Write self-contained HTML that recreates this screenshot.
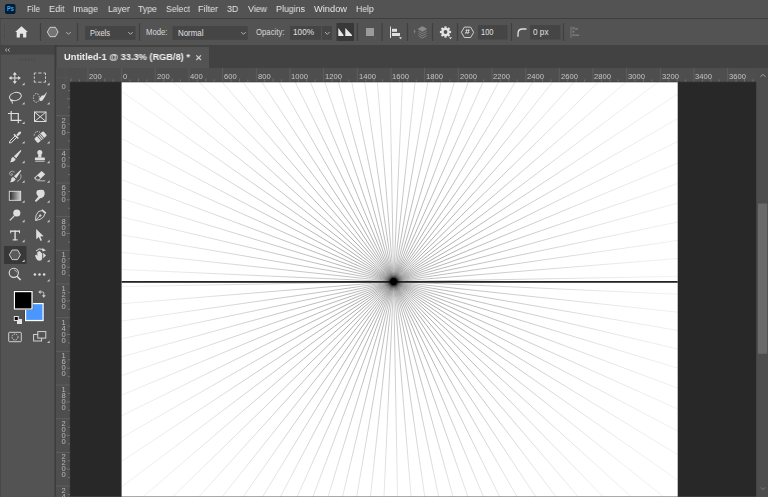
<!DOCTYPE html>
<html lang="en"><head><meta charset="utf-8"><title>Untitled-1 @ 33.3% (RGB/8)</title>
<style>
html,body{margin:0;padding:0;background:#535353;}
body{width:768px;height:497px;overflow:hidden;position:relative;font-family:"Liberation Sans",sans-serif;}
svg.bg{position:absolute;left:0;top:0;width:768px;height:497px;display:block;}
.t{position:absolute;white-space:nowrap;line-height:1.15;transform-origin:0 50%;display:block;}
.r{line-height:1;}
.v{width:5px;text-align:center;}
.g{will-change:transform;}
</style></head>
<body>
<svg class="bg" width="768" height="497" viewBox="0 0 768 497">
<rect x="0" y="0" width="768" height="497" fill="#535353" />
<rect x="0" y="19" width="1" height="26" fill="#494949" />
<rect x="0" y="18" width="768" height="1" fill="#3f3f3f" />
<rect x="0" y="45" width="768" height="23" fill="#424242" />
<rect x="0" y="45" width="55" height="10" fill="#454545" />
<rect x="0" y="54.5" width="55" height="443" fill="#535353" />
<rect x="0" y="54.5" width="1" height="443" fill="#484848" />
<rect x="54.5" y="45" width="2" height="452" fill="#3c3c3c" />
<rect x="56.5" y="47" width="152.5" height="21" fill="#535353" />
<rect x="56" y="68" width="712" height="14" fill="#4e4e4e" />
<rect x="56" y="82" width="14" height="415" fill="#4e4e4e" />
<rect x="70" y="82" width="686.5" height="415" fill="#282828" />
<rect x="756.5" y="68" width="11.5" height="429" fill="#4d4d4d" />
<rect x="758" y="203.5" width="9.2" height="150.2" fill="#6a6a6a" rx="0.8"/>
<rect x="121.6" y="82" width="556.1" height="415" fill="#ffffff" />
<defs><clipPath id="doc"><rect x="121.6" y="82" width="556.1" height="415"/></clipPath><radialGradient id="rg" gradientUnits="userSpaceOnUse" cx="393.6" cy="281.6" r="340"><stop offset="0.0000" stop-color="#000" stop-opacity="0.2"/><stop offset="0.0147" stop-color="#000" stop-opacity="0.22"/><stop offset="0.0265" stop-color="#000" stop-opacity="0.3"/><stop offset="0.0412" stop-color="#000" stop-opacity="0.33"/><stop offset="0.0529" stop-color="#000" stop-opacity="0.31"/><stop offset="0.0824" stop-color="#000" stop-opacity="0.3"/><stop offset="0.1324" stop-color="#000" stop-opacity="0.33"/><stop offset="0.2941" stop-color="#000" stop-opacity="0.28"/><stop offset="0.4706" stop-color="#000" stop-opacity="0.2"/><stop offset="0.6471" stop-color="#000" stop-opacity="0.12"/><stop offset="0.8235" stop-color="#000" stop-opacity="0.075"/><stop offset="1.0000" stop-color="#000" stop-opacity="0.055"/></radialGradient><radialGradient id="halo" gradientUnits="userSpaceOnUse" cx="393.6" cy="281.6" r="10"><stop offset="0" stop-color="#000" stop-opacity="1"/><stop offset="0.31" stop-color="#000" stop-opacity="1"/><stop offset="0.46" stop-color="#000" stop-opacity="0.45"/><stop offset="0.7" stop-color="#000" stop-opacity="0.15"/><stop offset="1" stop-color="#000" stop-opacity="0"/></radialGradient></defs>
<g clip-path="url(#doc)"><g stroke="url(#rg)" stroke-width="1" fill="none"><path d="M393.60 281.60L412.29 -137.98" stroke-opacity="0.69"/><path d="M393.60 281.60L438.60 -135.98" stroke-opacity="0.75"/><path d="M393.60 281.60L464.73 -132.33" stroke-opacity="0.80"/><path d="M393.60 281.60L490.58 -127.05" stroke-opacity="0.84"/><path d="M393.60 281.60L516.05 -120.16" stroke-opacity="0.87"/><path d="M393.60 281.60L541.03 -111.67" stroke-opacity="0.90"/><path d="M393.60 281.60L565.43 -101.64" stroke-opacity="0.93"/><path d="M393.60 281.60L589.16 -90.09" stroke-opacity="0.95"/><path d="M393.60 281.60L612.11 -77.08" stroke-opacity="0.97"/><path d="M393.60 281.60L634.20 -62.65" stroke-opacity="0.98"/><path d="M393.60 281.60L655.34 -46.87" stroke-opacity="0.99"/><path d="M393.60 281.60L675.45 -29.78" stroke-opacity="1.00"/><path d="M393.60 281.60L694.45 -11.47" stroke-opacity="1.00"/><path d="M393.60 281.60L712.26 8.00" stroke-opacity="1.00"/><path d="M393.60 281.60L728.81 28.55" stroke-opacity="0.99"/><path d="M393.60 281.60L744.03 50.09" stroke-opacity="0.98"/><path d="M393.60 281.60L757.88 72.55" stroke-opacity="0.96"/><path d="M393.60 281.60L770.29 95.84" stroke-opacity="0.94"/><path d="M393.60 281.60L781.21 119.86" stroke-opacity="0.92"/><path d="M393.60 281.60L790.60 144.51" stroke-opacity="0.89"/><path d="M393.60 281.60L798.42 169.71" stroke-opacity="0.86"/><path d="M393.60 281.60L804.65 195.35" stroke-opacity="0.82"/><path d="M393.60 281.60L809.25 221.33" stroke-opacity="0.78"/><path d="M393.60 281.60L812.22 247.55" stroke-opacity="0.73"/><path d="M393.60 281.60L813.53 273.90" stroke-opacity="0.66"/><path d="M393.60 281.60L813.18 300.29" stroke-opacity="0.69"/><path d="M393.60 281.60L811.18 326.60" stroke-opacity="0.75"/><path d="M393.60 281.60L807.53 352.73" stroke-opacity="0.80"/><path d="M393.60 281.60L802.25 378.58" stroke-opacity="0.84"/><path d="M393.60 281.60L795.36 404.05" stroke-opacity="0.87"/><path d="M393.60 281.60L786.87 429.03" stroke-opacity="0.90"/><path d="M393.60 281.60L776.84 453.43" stroke-opacity="0.93"/><path d="M393.60 281.60L765.29 477.16" stroke-opacity="0.95"/><path d="M393.60 281.60L752.28 500.11" stroke-opacity="0.97"/><path d="M393.60 281.60L737.85 522.20" stroke-opacity="0.98"/><path d="M393.60 281.60L722.07 543.34" stroke-opacity="0.99"/><path d="M393.60 281.60L704.98 563.45" stroke-opacity="1.00"/><path d="M393.60 281.60L686.67 582.45" stroke-opacity="1.00"/><path d="M393.60 281.60L667.20 600.26" stroke-opacity="1.00"/><path d="M393.60 281.60L646.65 616.81" stroke-opacity="0.99"/><path d="M393.60 281.60L625.11 632.03" stroke-opacity="0.98"/><path d="M393.60 281.60L602.65 645.88" stroke-opacity="0.96"/><path d="M393.60 281.60L579.36 658.29" stroke-opacity="0.94"/><path d="M393.60 281.60L555.34 669.21" stroke-opacity="0.92"/><path d="M393.60 281.60L530.69 678.60" stroke-opacity="0.89"/><path d="M393.60 281.60L505.49 686.42" stroke-opacity="0.86"/><path d="M393.60 281.60L479.85 692.65" stroke-opacity="0.82"/><path d="M393.60 281.60L453.87 697.25" stroke-opacity="0.78"/><path d="M393.60 281.60L427.65 700.22" stroke-opacity="0.73"/><path d="M393.60 281.60L401.30 701.53" stroke-opacity="0.66"/><path d="M393.60 281.60L374.91 701.18" stroke-opacity="0.69"/><path d="M393.60 281.60L348.60 699.18" stroke-opacity="0.75"/><path d="M393.60 281.60L322.47 695.53" stroke-opacity="0.80"/><path d="M393.60 281.60L296.62 690.25" stroke-opacity="0.84"/><path d="M393.60 281.60L271.15 683.36" stroke-opacity="0.87"/><path d="M393.60 281.60L246.17 674.87" stroke-opacity="0.90"/><path d="M393.60 281.60L221.77 664.84" stroke-opacity="0.93"/><path d="M393.60 281.60L198.04 653.29" stroke-opacity="0.95"/><path d="M393.60 281.60L175.09 640.28" stroke-opacity="0.97"/><path d="M393.60 281.60L153.00 625.85" stroke-opacity="0.98"/><path d="M393.60 281.60L131.86 610.07" stroke-opacity="0.99"/><path d="M393.60 281.60L111.75 592.98" stroke-opacity="1.00"/><path d="M393.60 281.60L92.75 574.67" stroke-opacity="1.00"/><path d="M393.60 281.60L74.94 555.20" stroke-opacity="1.00"/><path d="M393.60 281.60L58.39 534.65" stroke-opacity="0.99"/><path d="M393.60 281.60L43.17 513.11" stroke-opacity="0.98"/><path d="M393.60 281.60L29.32 490.65" stroke-opacity="0.96"/><path d="M393.60 281.60L16.91 467.36" stroke-opacity="0.94"/><path d="M393.60 281.60L5.99 443.34" stroke-opacity="0.92"/><path d="M393.60 281.60L-3.40 418.69" stroke-opacity="0.89"/><path d="M393.60 281.60L-11.22 393.49" stroke-opacity="0.86"/><path d="M393.60 281.60L-17.45 367.85" stroke-opacity="0.82"/><path d="M393.60 281.60L-22.05 341.87" stroke-opacity="0.78"/><path d="M393.60 281.60L-25.02 315.65" stroke-opacity="0.73"/><path d="M393.60 281.60L-26.33 289.30" stroke-opacity="0.66"/><path d="M393.60 281.60L-25.98 262.91" stroke-opacity="0.69"/><path d="M393.60 281.60L-23.98 236.60" stroke-opacity="0.75"/><path d="M393.60 281.60L-20.33 210.47" stroke-opacity="0.80"/><path d="M393.60 281.60L-15.05 184.62" stroke-opacity="0.84"/><path d="M393.60 281.60L-8.16 159.15" stroke-opacity="0.87"/><path d="M393.60 281.60L0.33 134.17" stroke-opacity="0.90"/><path d="M393.60 281.60L10.36 109.77" stroke-opacity="0.93"/><path d="M393.60 281.60L21.91 86.04" stroke-opacity="0.95"/><path d="M393.60 281.60L34.92 63.09" stroke-opacity="0.97"/><path d="M393.60 281.60L49.35 41.00" stroke-opacity="0.98"/><path d="M393.60 281.60L65.13 19.86" stroke-opacity="0.99"/><path d="M393.60 281.60L82.22 -0.25" stroke-opacity="1.00"/><path d="M393.60 281.60L100.53 -19.25" stroke-opacity="1.00"/><path d="M393.60 281.60L120.00 -37.06" stroke-opacity="1.00"/><path d="M393.60 281.60L140.55 -53.61" stroke-opacity="0.99"/><path d="M393.60 281.60L162.09 -68.83" stroke-opacity="0.98"/><path d="M393.60 281.60L184.55 -82.68" stroke-opacity="0.96"/><path d="M393.60 281.60L207.84 -95.09" stroke-opacity="0.94"/><path d="M393.60 281.60L231.86 -106.01" stroke-opacity="0.92"/><path d="M393.60 281.60L256.51 -115.40" stroke-opacity="0.89"/><path d="M393.60 281.60L281.71 -123.22" stroke-opacity="0.86"/><path d="M393.60 281.60L307.35 -129.45" stroke-opacity="0.82"/><path d="M393.60 281.60L333.33 -134.05" stroke-opacity="0.78"/><path d="M393.60 281.60L359.55 -137.02" stroke-opacity="0.73"/><path d="M393.60 281.60L385.90 -138.33" stroke-opacity="0.66"/></g><rect x="121" y="281.05" width="557" height="1.7" fill="#1a1a1a"/><circle cx="393.6" cy="281.6" r="10" fill="url(#halo)"/></g>
<rect x="87.43" y="68" width="1" height="14" fill="#5e5e5e" />
<rect x="121.10" y="68" width="1" height="14" fill="#5e5e5e" />
<rect x="154.77" y="68" width="1" height="14" fill="#5e5e5e" />
<rect x="188.44" y="68" width="1" height="14" fill="#5e5e5e" />
<rect x="222.11" y="68" width="1" height="14" fill="#5e5e5e" />
<rect x="255.78" y="68" width="1" height="14" fill="#5e5e5e" />
<rect x="289.45" y="68" width="1" height="14" fill="#5e5e5e" />
<rect x="323.12" y="68" width="1" height="14" fill="#5e5e5e" />
<rect x="356.79" y="68" width="1" height="14" fill="#5e5e5e" />
<rect x="390.46" y="68" width="1" height="14" fill="#5e5e5e" />
<rect x="424.13" y="68" width="1" height="14" fill="#5e5e5e" />
<rect x="457.80" y="68" width="1" height="14" fill="#5e5e5e" />
<rect x="491.47" y="68" width="1" height="14" fill="#5e5e5e" />
<rect x="525.14" y="68" width="1" height="14" fill="#5e5e5e" />
<rect x="558.81" y="68" width="1" height="14" fill="#5e5e5e" />
<rect x="592.48" y="68" width="1" height="14" fill="#5e5e5e" />
<rect x="626.15" y="68" width="1" height="14" fill="#5e5e5e" />
<rect x="659.82" y="68" width="1" height="14" fill="#5e5e5e" />
<rect x="693.49" y="68" width="1" height="14" fill="#5e5e5e" />
<rect x="727.16" y="68" width="1" height="14" fill="#5e5e5e" />
<rect x="70.59" y="78.5" width="1" height="3.5" fill="#6e6e6e" />
<rect x="79.01" y="79.5" width="1" height="2.5" fill="#6e6e6e" />
<rect x="95.85" y="79.5" width="1" height="2.5" fill="#6e6e6e" />
<rect x="104.26" y="78.5" width="1" height="3.5" fill="#6e6e6e" />
<rect x="112.68" y="79.5" width="1" height="2.5" fill="#6e6e6e" />
<rect x="129.52" y="79.5" width="1" height="2.5" fill="#6e6e6e" />
<rect x="137.94" y="78.5" width="1" height="3.5" fill="#6e6e6e" />
<rect x="146.35" y="79.5" width="1" height="2.5" fill="#6e6e6e" />
<rect x="163.19" y="79.5" width="1" height="2.5" fill="#6e6e6e" />
<rect x="171.60" y="78.5" width="1" height="3.5" fill="#6e6e6e" />
<rect x="180.02" y="79.5" width="1" height="2.5" fill="#6e6e6e" />
<rect x="196.86" y="79.5" width="1" height="2.5" fill="#6e6e6e" />
<rect x="205.28" y="78.5" width="1" height="3.5" fill="#6e6e6e" />
<rect x="213.69" y="79.5" width="1" height="2.5" fill="#6e6e6e" />
<rect x="230.53" y="79.5" width="1" height="2.5" fill="#6e6e6e" />
<rect x="238.94" y="78.5" width="1" height="3.5" fill="#6e6e6e" />
<rect x="247.36" y="79.5" width="1" height="2.5" fill="#6e6e6e" />
<rect x="264.20" y="79.5" width="1" height="2.5" fill="#6e6e6e" />
<rect x="272.62" y="78.5" width="1" height="3.5" fill="#6e6e6e" />
<rect x="281.03" y="79.5" width="1" height="2.5" fill="#6e6e6e" />
<rect x="297.87" y="79.5" width="1" height="2.5" fill="#6e6e6e" />
<rect x="306.28" y="78.5" width="1" height="3.5" fill="#6e6e6e" />
<rect x="314.70" y="79.5" width="1" height="2.5" fill="#6e6e6e" />
<rect x="331.54" y="79.5" width="1" height="2.5" fill="#6e6e6e" />
<rect x="339.96" y="78.5" width="1" height="3.5" fill="#6e6e6e" />
<rect x="348.37" y="79.5" width="1" height="2.5" fill="#6e6e6e" />
<rect x="365.21" y="79.5" width="1" height="2.5" fill="#6e6e6e" />
<rect x="373.62" y="78.5" width="1" height="3.5" fill="#6e6e6e" />
<rect x="382.04" y="79.5" width="1" height="2.5" fill="#6e6e6e" />
<rect x="398.88" y="79.5" width="1" height="2.5" fill="#6e6e6e" />
<rect x="407.29" y="78.5" width="1" height="3.5" fill="#6e6e6e" />
<rect x="415.71" y="79.5" width="1" height="2.5" fill="#6e6e6e" />
<rect x="432.55" y="79.5" width="1" height="2.5" fill="#6e6e6e" />
<rect x="440.97" y="78.5" width="1" height="3.5" fill="#6e6e6e" />
<rect x="449.38" y="79.5" width="1" height="2.5" fill="#6e6e6e" />
<rect x="466.22" y="79.5" width="1" height="2.5" fill="#6e6e6e" />
<rect x="474.63" y="78.5" width="1" height="3.5" fill="#6e6e6e" />
<rect x="483.05" y="79.5" width="1" height="2.5" fill="#6e6e6e" />
<rect x="499.89" y="79.5" width="1" height="2.5" fill="#6e6e6e" />
<rect x="508.31" y="78.5" width="1" height="3.5" fill="#6e6e6e" />
<rect x="516.72" y="79.5" width="1" height="2.5" fill="#6e6e6e" />
<rect x="533.56" y="79.5" width="1" height="2.5" fill="#6e6e6e" />
<rect x="541.98" y="78.5" width="1" height="3.5" fill="#6e6e6e" />
<rect x="550.39" y="79.5" width="1" height="2.5" fill="#6e6e6e" />
<rect x="567.23" y="79.5" width="1" height="2.5" fill="#6e6e6e" />
<rect x="575.64" y="78.5" width="1" height="3.5" fill="#6e6e6e" />
<rect x="584.06" y="79.5" width="1" height="2.5" fill="#6e6e6e" />
<rect x="600.90" y="79.5" width="1" height="2.5" fill="#6e6e6e" />
<rect x="609.32" y="78.5" width="1" height="3.5" fill="#6e6e6e" />
<rect x="617.73" y="79.5" width="1" height="2.5" fill="#6e6e6e" />
<rect x="634.57" y="79.5" width="1" height="2.5" fill="#6e6e6e" />
<rect x="642.99" y="78.5" width="1" height="3.5" fill="#6e6e6e" />
<rect x="651.40" y="79.5" width="1" height="2.5" fill="#6e6e6e" />
<rect x="668.24" y="79.5" width="1" height="2.5" fill="#6e6e6e" />
<rect x="676.66" y="78.5" width="1" height="3.5" fill="#6e6e6e" />
<rect x="685.07" y="79.5" width="1" height="2.5" fill="#6e6e6e" />
<rect x="701.91" y="79.5" width="1" height="2.5" fill="#6e6e6e" />
<rect x="710.33" y="78.5" width="1" height="3.5" fill="#6e6e6e" />
<rect x="718.74" y="79.5" width="1" height="2.5" fill="#6e6e6e" />
<rect x="735.58" y="79.5" width="1" height="2.5" fill="#6e6e6e" />
<rect x="744.00" y="78.5" width="1" height="3.5" fill="#6e6e6e" />
<rect x="752.41" y="79.5" width="1" height="2.5" fill="#6e6e6e" />
<rect x="70" y="81.6" width="686.5" height="0.7" fill="#3a3a3a" />
<rect x="69.7" y="82" width="0.6" height="415" fill="#3a3a3a" />
<rect x="65.5" y="68.5" width="0.8" height="1" fill="#5e5e5e" />
<rect x="56.5" y="77" width="1" height="0.8" fill="#5e5e5e" />
<rect x="65.5" y="70.5" width="0.8" height="1" fill="#5e5e5e" />
<rect x="58.5" y="77" width="1" height="0.8" fill="#5e5e5e" />
<rect x="65.5" y="72.5" width="0.8" height="1" fill="#5e5e5e" />
<rect x="60.5" y="77" width="1" height="0.8" fill="#5e5e5e" />
<rect x="65.5" y="74.5" width="0.8" height="1" fill="#5e5e5e" />
<rect x="62.5" y="77" width="1" height="0.8" fill="#5e5e5e" />
<rect x="65.5" y="76.5" width="0.8" height="1" fill="#5e5e5e" />
<rect x="64.5" y="77" width="1" height="0.8" fill="#5e5e5e" />
<rect x="65.5" y="78.5" width="0.8" height="1" fill="#5e5e5e" />
<rect x="66.5" y="77" width="1" height="0.8" fill="#5e5e5e" />
<rect x="65.5" y="80.5" width="0.8" height="1" fill="#5e5e5e" />
<rect x="68.5" y="77" width="1" height="0.8" fill="#5e5e5e" />
<rect x="56" y="115.17" width="14" height="1" fill="#5e5e5e" />
<rect x="56" y="148.84" width="14" height="1" fill="#5e5e5e" />
<rect x="56" y="182.51" width="14" height="1" fill="#5e5e5e" />
<rect x="56" y="216.18" width="14" height="1" fill="#5e5e5e" />
<rect x="56" y="249.85" width="14" height="1" fill="#5e5e5e" />
<rect x="56" y="283.52" width="14" height="1" fill="#5e5e5e" />
<rect x="56" y="317.19" width="14" height="1" fill="#5e5e5e" />
<rect x="56" y="350.86" width="14" height="1" fill="#5e5e5e" />
<rect x="56" y="384.53" width="14" height="1" fill="#5e5e5e" />
<rect x="56" y="418.20" width="14" height="1" fill="#5e5e5e" />
<rect x="56" y="451.87" width="14" height="1" fill="#5e5e5e" />
<rect x="56" y="485.54" width="14" height="1" fill="#5e5e5e" />
<rect x="68" y="89.92" width="2" height="1" fill="#6e6e6e" />
<rect x="67" y="98.34" width="3" height="1" fill="#6e6e6e" />
<rect x="68" y="106.75" width="2" height="1" fill="#6e6e6e" />
<rect x="68" y="123.59" width="2" height="1" fill="#6e6e6e" />
<rect x="67" y="132.00" width="3" height="1" fill="#6e6e6e" />
<rect x="68" y="140.42" width="2" height="1" fill="#6e6e6e" />
<rect x="68" y="157.26" width="2" height="1" fill="#6e6e6e" />
<rect x="67" y="165.68" width="3" height="1" fill="#6e6e6e" />
<rect x="68" y="174.09" width="2" height="1" fill="#6e6e6e" />
<rect x="68" y="190.93" width="2" height="1" fill="#6e6e6e" />
<rect x="67" y="199.34" width="3" height="1" fill="#6e6e6e" />
<rect x="68" y="207.76" width="2" height="1" fill="#6e6e6e" />
<rect x="68" y="224.60" width="2" height="1" fill="#6e6e6e" />
<rect x="67" y="233.02" width="3" height="1" fill="#6e6e6e" />
<rect x="68" y="241.43" width="2" height="1" fill="#6e6e6e" />
<rect x="68" y="258.27" width="2" height="1" fill="#6e6e6e" />
<rect x="67" y="266.69" width="3" height="1" fill="#6e6e6e" />
<rect x="68" y="275.10" width="2" height="1" fill="#6e6e6e" />
<rect x="68" y="291.94" width="2" height="1" fill="#6e6e6e" />
<rect x="67" y="300.36" width="3" height="1" fill="#6e6e6e" />
<rect x="68" y="308.77" width="2" height="1" fill="#6e6e6e" />
<rect x="68" y="325.61" width="2" height="1" fill="#6e6e6e" />
<rect x="67" y="334.02" width="3" height="1" fill="#6e6e6e" />
<rect x="68" y="342.44" width="2" height="1" fill="#6e6e6e" />
<rect x="68" y="359.28" width="2" height="1" fill="#6e6e6e" />
<rect x="67" y="367.69" width="3" height="1" fill="#6e6e6e" />
<rect x="68" y="376.11" width="2" height="1" fill="#6e6e6e" />
<rect x="68" y="392.95" width="2" height="1" fill="#6e6e6e" />
<rect x="67" y="401.37" width="3" height="1" fill="#6e6e6e" />
<rect x="68" y="409.78" width="2" height="1" fill="#6e6e6e" />
<rect x="68" y="426.62" width="2" height="1" fill="#6e6e6e" />
<rect x="67" y="435.04" width="3" height="1" fill="#6e6e6e" />
<rect x="68" y="443.45" width="2" height="1" fill="#6e6e6e" />
<rect x="68" y="460.29" width="2" height="1" fill="#6e6e6e" />
<rect x="67" y="468.71" width="3" height="1" fill="#6e6e6e" />
<rect x="68" y="477.12" width="2" height="1" fill="#6e6e6e" />
<rect x="68" y="493.96" width="2" height="1" fill="#6e6e6e" />
<rect x="5" y="4" width="10.5" height="10" rx="1.8" fill="#001e36"/>
<rect x="39.9" y="23" width="1.2" height="18" fill="#404040" />
<rect x="76.9" y="23" width="1.2" height="18" fill="#404040" />
<rect x="138.9" y="23" width="1.2" height="18" fill="#404040" />
<rect x="356.9" y="23" width="1.2" height="18" fill="#404040" />
<rect x="381.4" y="23" width="1.2" height="18" fill="#404040" />
<rect x="406.9" y="23" width="1.2" height="18" fill="#404040" />
<rect x="431.9" y="23" width="1.2" height="18" fill="#404040" />
<rect x="456.9" y="23" width="1.2" height="18" fill="#404040" />
<rect x="510.9" y="23" width="1.2" height="18" fill="#404040" />
<rect x="562.9" y="23" width="1.2" height="18" fill="#404040" />
<rect x="4" y="25" width="1" height="1.2" fill="#474747" />
<rect x="4" y="27" width="1" height="1.2" fill="#474747" />
<rect x="4" y="29" width="1" height="1.2" fill="#474747" />
<rect x="4" y="31" width="1" height="1.2" fill="#474747" />
<rect x="4" y="33" width="1" height="1.2" fill="#474747" />
<rect x="4" y="35" width="1" height="1.2" fill="#474747" />
<rect x="4" y="37" width="1" height="1.2" fill="#474747" />
<path d="M21.5 26.3 L27.8 32 L26.3 32 L26.3 37.5 L23.1 37.5 L23.1 33.8 L19.9 33.8 L19.9 37.5 L16.7 37.5 L16.7 32 L15.2 32 Z" fill="#e6e6e6"/>
<polygon points="47.30,32.00 50.00,27.30 55.40,27.30 58.10,32.00 55.40,36.70 50.00,36.70" fill="#747474" stroke="#d8d8d8" stroke-width="0.9" stroke-linejoin="round"/>
<path d="M66.25 32.050000000000004 L68.5 34.35 L70.75 32.050000000000004" fill="none" stroke="#bdbdbd" stroke-width="0.9"/>
<rect x="85" y="26" width="50.5" height="13.8" fill="#454545" />
<path d="M128.25 32.050000000000004 L130.5 34.35 L132.75 32.050000000000004" fill="none" stroke="#bdbdbd" stroke-width="0.9"/>
<rect x="172.5" y="26" width="75.2" height="13.8" fill="#454545" />
<path d="M241.25 32.050000000000004 L243.5 34.35 L245.75 32.050000000000004" fill="none" stroke="#bdbdbd" stroke-width="0.9"/>
<rect x="290" y="26" width="31" height="13.8" fill="#454545" />
<rect x="322" y="26" width="10" height="13.8" fill="#454545" />
<path d="M325.05 32.050000000000004 L327.3 34.35 L329.55 32.050000000000004" fill="none" stroke="#bdbdbd" stroke-width="0.9"/>
<rect x="336.5" y="23" width="17.5" height="18" fill="#383838" />
<path d="M338.3 28 L343.5 35 L343.5 36 L338.3 36 Z M345.3 28 L352 35 L352 36 L345.3 36 Z" fill="#e8e8e8"/>
<rect x="366" y="28" width="8" height="8" fill="#9b9b9b" />
<rect x="375" y="37.5" width="1" height="1" fill="#6a6a6a" />
<rect x="390" y="26.5" width="1" height="11.5" fill="#e0e0e0" />
<rect x="392" y="28.8" width="5" height="3" fill="#e0e0e0" />
<rect x="392" y="33" width="8" height="3" fill="#e0e0e0" />
<path d="M399 37.2 L402 37.2 L400.5 39.2 Z" fill="#e0e0e0"/>
<g fill="none" stroke="#8a8a8a" stroke-width="0.8"><path d="M418.3 29 L422.4 26.6 L426.5 29 L422.4 31.4 Z" fill="#8a8a8a"/><path d="M418.3 31.3 L422.4 33.7 L426.5 31.3"/><path d="M418.3 33.5 L422.4 35.9 L426.5 33.5"/><path d="M418.3 35.7 L422.4 38.1 L426.5 35.7"/><path d="M414.6 33.3 L414.6 30.3 M413.7 31.2 L414.6 30.3 L415.5 31.2"/></g>
<g transform="translate(445.5 32)" fill="#e4e4e4"><rect x="-1.1" y="-5.6" width="2.2" height="3" transform="rotate(0)"/><rect x="-1.1" y="-5.6" width="2.2" height="3" transform="rotate(45)"/><rect x="-1.1" y="-5.6" width="2.2" height="3" transform="rotate(90)"/><rect x="-1.1" y="-5.6" width="2.2" height="3" transform="rotate(135)"/><rect x="-1.1" y="-5.6" width="2.2" height="3" transform="rotate(180)"/><rect x="-1.1" y="-5.6" width="2.2" height="3" transform="rotate(225)"/><rect x="-1.1" y="-5.6" width="2.2" height="3" transform="rotate(270)"/><rect x="-1.1" y="-5.6" width="2.2" height="3" transform="rotate(315)"/><path fill-rule="evenodd" d="M0 -4.2 A4.2 4.2 0 1 0 0 4.2 A4.2 4.2 0 1 0 0 -4.2 Z M0 -1.9 A1.9 1.9 0 1 1 0 1.9 A1.9 1.9 0 1 1 0 -1.9 Z"/></g>
<path d="M449 37.2 L452 37.2 L450.5 39.2 Z" fill="#e0e0e0"/>
<polygon points="461.30,32.30 464.40,27.10 470.60,27.10 473.70,32.30 470.60,37.50 464.40,37.50" fill="none" stroke="#dcdcdc" stroke-width="0.9" stroke-linejoin="round"/>
<rect x="478" y="25" width="29.5" height="14.5" fill="#454545" />
<path d="M518 36.8 L518 33.5 Q518 29 522.5 29 L526.5 29" fill="none" stroke="#e0e0e0" stroke-width="1.3"/>
<rect x="530" y="25" width="30.5" height="14.5" fill="#454545" />
<rect x="570.5" y="26.5" width="1" height="11.5" fill="#7c7c7c" />
<rect x="572.5" y="27" width="2" height="2.2" fill="#7c7c7c" />
<rect x="572.5" y="30.5" width="2" height="2.2" fill="#7c7c7c" />
<rect x="572.5" y="34" width="2" height="2.2" fill="#7c7c7c" />
<rect x="575" y="28.2" width="3" height="1.5" fill="#7c7c7c" />
<rect x="575" y="34.5" width="4" height="1.5" fill="#7c7c7c" />
<path d="M196.3 55.3 L201 60 M201 55.3 L196.3 60" stroke="#d2d2d2" stroke-width="1.1" fill="none"/>
<path d="M7 48.5 L5.3 50 L7 51.5 M9.6 48.5 L7.9 50 L9.6 51.5" stroke="#c0c0c0" stroke-width="0.8" fill="none"/>
<rect x="19.5" y="58.5" width="0.8" height="2.2" fill="#454545" />
<rect x="22.3" y="58.5" width="0.8" height="2.2" fill="#454545" />
<rect x="25.1" y="58.5" width="0.8" height="2.2" fill="#454545" />
<rect x="27.9" y="58.5" width="0.8" height="2.2" fill="#454545" />
<rect x="30.7" y="58.5" width="0.8" height="2.2" fill="#454545" />
<rect x="33.5" y="58.5" width="0.8" height="2.2" fill="#454545" />
<path d="M760.5 76.8 L763 74.3 L765.5 76.8" stroke="#aaa" stroke-width="0.9" fill="none"/>
<path d="M760.6 487.3 L763 489.7 L765.4 487.3" stroke="#7a7a7a" stroke-width="0.9" fill="none"/>
<rect x="4" y="246" width="22.5" height="18" fill="#383838" />
<g transform="translate(14.8 78)" stroke="none"><rect x="-4" y="-0.65" width="8" height="1.3" fill="#c4c4c4"/><rect x="-0.65" y="-4" width="1.3" height="8" fill="#c4c4c4"/><path fill="#dedede" d="M0 -6 L2.1 -3.3 L-2.1 -3.3 Z M0 6 L2.1 3.3 L-2.1 3.3 Z M-6 0 L-3.3 -2.1 L-3.3 2.1 Z M6 0 L3.3 -2.1 L3.3 2.1 Z"/></g>
<path d="M34.3 75 L34.3 73 L36.3 73 M38.2 73 L41.6 73 M43.5 73 L45.5 73 L45.5 75 M45.5 76.4 L45.5 78.8 M45.5 80.2 L45.5 82.2 L43.5 82.2 M41.6 82.2 L38.2 82.2 M36.3 82.2 L34.3 82.2 L34.3 80.2 M34.3 78.8 L34.3 76.4" fill="none" stroke="#d2d2d2" stroke-width="0.95"/>
<g fill="none" stroke="#dedede" stroke-width="1"><ellipse cx="15.4" cy="96.5" rx="6" ry="4" transform="rotate(-14 15.4 96.5)"/><path d="M10.8 99.6 Q10.3 101.2 12.3 101.6 L12.3 103.6 M10.6 100.6 L12.8 100.2"/></g>
<g><ellipse cx="36.4" cy="97.9" rx="3" ry="4.4" fill="none" stroke="#dedede" stroke-width="0.85" stroke-dasharray="1.5 1.1"/><ellipse cx="41.9" cy="98.2" rx="1.8" ry="3.2" transform="rotate(36 41.9 98.2)" fill="#dedede"/><path d="M43 96.6 L46.6 92.3 L46.9 92.6 L44.6 97.6 Z" fill="#dedede"/></g>
<g fill="none" stroke="#dedede" stroke-width="1.2"><path d="M8 113.5 L18.3 113.5 L18.3 123.2"/><path d="M11.2 111 L11.2 120.3 L21.5 120.3"/></g>
<g fill="none" stroke="#dedede" stroke-width="1"><rect x="34.5" y="112" width="11.5" height="9.5"/><path d="M34.5 112 L46 121.5 M46 112 L34.5 121.5"/></g>
<g><path d="M9.8 141.2 L15.5 135.5 L17 137 L11.3 142.7 L9.5 143 Z" fill="none" stroke="#dedede" stroke-width="1"/><path d="M14.5 133.8 L18.8 138 L17.7 139 L13.4 134.8 Z M16.5 134.8 L18.8 132 Q20 131 20.8 131.8 Q21.5 132.8 20.6 133.8 L17.8 136.2 Z" fill="#dedede"/></g>
<g><path d="M34.2 135.5 A3.5 3.5 0 0 1 40.5 133" fill="none" stroke="#dedede" stroke-width="0.9" stroke-dasharray="1.4 1"/><g transform="rotate(-40 40.5 137)"><rect x="34.5" y="134.2" width="12" height="5.8" rx="1.2" fill="#dedede"/><rect x="38.4" y="134.2" width="0.8" height="5.8" fill="#535353"/><rect x="40.2" y="134.2" width="0.8" height="5.8" fill="#535353"/><rect x="42" y="134.2" width="0.8" height="5.8" fill="#535353"/></g></g>
<g fill="#dedede" transform="translate(0 0)"><path d="M20.6 150 L21.4 150.7 L16.3 158.3 L13.9 156.3 Z"/><path d="M13.2 157 L15.6 159 Q15.2 162 10 162.3 Q11.6 160.4 11.3 158.6 Q11.8 157 13.2 157 Z"/></g>
<g fill="#dedede"><circle cx="39.8" cy="152.6" r="2.5"/><path d="M38.5 154 L41.1 154 L41.6 157.6 L38 157.6 Z"/><rect x="34.9" y="157.5" width="10" height="2.7" rx="0.6"/><rect x="35.2" y="160.9" width="9.4" height="0.9" fill="#c0c0c0"/></g>
<g fill="#dedede" transform="translate(0 19.9)"><path d="M20.6 150 L21.4 150.7 L16.3 158.3 L13.9 156.3 Z"/><path d="M13.2 157 L15.6 159 Q15.2 162 10 162.3 Q11.6 160.4 11.3 158.6 Q11.8 157 13.2 157 Z"/></g>
<path d="M14.6 172.2 Q12.2 170.2 10 172 Q8.6 173.8 10.6 175.2 Q12.4 175.8 12.6 174.2 Q12.4 173.2 11.4 173.6 M20.6 174.2 Q22.6 178.6 17 181.6" fill="none" stroke="#c4c4c4" stroke-width="0.75"/>
<g><path d="M41.6 170.9 L45.2 174.3 L39 180.3 L36.2 180.3 L34 178.1 Z" fill="#dedede"/><path d="M35.4 178 L37.8 175.7 L40.2 178 L38.6 179.5 L36.7 179.5 Z" fill="#535353"/><rect x="37.2" y="180.4" width="8" height="0.9" fill="#c8c8c8"/></g>
<defs><linearGradient id="gr" x1="0" x2="1" y1="0" y2="0"><stop offset="0" stop-color="#2a2a2a"/><stop offset="1" stop-color="#cfcfcf"/></linearGradient></defs>
<rect x="9.3" y="191.3" width="11.4" height="9" fill="url(#gr)" stroke="#dedede" stroke-width="0.9"/>
<g fill="#dedede"><path d="M37 190.6 Q40 189.3 43.4 190 Q45.2 191.5 44.6 194.8 Q43.8 197.8 41 198.3 L39.5 197.3 L38.2 196.2 Q35.3 194 37 190.6 Z"/><path d="M39.3 195.2 L41.6 197 L36.6 201.5 Q35.4 202 34.9 200.7 Z"/></g>
<g><circle cx="16.8" cy="213" r="3.6" fill="#dedede"/><path d="M14.3 215.8 L9.8 220.3" stroke="#dedede" stroke-width="1.2" fill="none"/></g>
<g fill="none" stroke="#dedede" stroke-width="0.9"><path d="M35.5 220.5 Q35 215 38.5 211.5 L42.5 210.5 L45 213.5 L43.5 217 Q40.5 220 35.5 220.5 Z"/><path d="M36 220 L39.8 216"/><circle cx="40.2" cy="215.5" r="0.8" fill="#dedede"/><path d="M41.8 209.8 L45.8 213.2" stroke-width="1.6"/></g>
<g fill="#dedede"><rect x="10.2" y="230.5" width="9.8" height="1.4"/><rect x="10.2" y="230.5" width="1" height="2.8"/><rect x="19" y="230.5" width="1" height="2.8"/><rect x="14.4" y="230.5" width="1.4" height="9.8"/><rect x="12.6" y="239.3" width="5" height="1.1"/></g>
<path d="M36.2 229 L36.2 239.3 L38.8 237 L40.6 241 L42 240.3 L40.3 236.4 L43.6 236.2 Z" fill="#dedede"/>
<polygon points="9.40,254.80 12.15,250.00 17.65,250.00 20.40,254.80 17.65,259.60 12.15,259.60" fill="#5a5a5a" stroke="#dedede" stroke-width="0.9" stroke-linejoin="round"/>
<g><path d="M36 251 Q39 247.5 43 249.5" fill="none" stroke="#dedede" stroke-width="1"/><path d="M42.5 248 L46 250.5 L42.3 251.6 Z" fill="#dedede"/><path d="M35 255.5 L36.5 254.5 L37.3 256.3 L37.3 252 L38.5 252 L38.5 251 L39.8 251 L39.8 251.8 L41 251.8 L41 253 L42.2 253 L42.2 258.5 Q42 260.8 39.5 260.8 Q37.3 260.8 36.3 258.8 Z" fill="#dedede"/><path d="M43.2 252.8 L46 255.5 L43.2 258.3 Z" fill="#dedede"/></g>
<g fill="none" stroke="#dedede"><circle cx="13.8" cy="272.8" r="4.6" stroke-width="1.1"/><path d="M17 276.2 L20.6 280" stroke-width="1.5"/><path d="M14.2 269.9 A3 3 0 0 1 16.7 272.3" stroke-width="0.7"/></g>
<circle cx="34.9" cy="274.6" r="1.25" fill="#dedede"/>
<circle cx="39.5" cy="274.6" r="1.25" fill="#dedede"/>
<circle cx="44.1" cy="274.6" r="1.25" fill="#dedede"/>
<path d="M22 85.19999999999999 L24.6 85.19999999999999 L24.6 82.6 Z" fill="#c8c8c8"/>
<path d="M47 85.19999999999999 L49.6 85.19999999999999 L49.6 82.6 Z" fill="#c8c8c8"/>
<path d="M22 104.49999999999999 L24.6 104.49999999999999 L24.6 101.89999999999999 Z" fill="#c8c8c8"/>
<path d="M47 104.49999999999999 L49.6 104.49999999999999 L49.6 101.89999999999999 Z" fill="#c8c8c8"/>
<path d="M22 123.99999999999999 L24.6 123.99999999999999 L24.6 121.39999999999999 Z" fill="#c8c8c8"/>
<path d="M22 143.5 L24.6 143.5 L24.6 140.9 Z" fill="#c8c8c8"/>
<path d="M47 143.5 L49.6 143.5 L49.6 140.9 Z" fill="#c8c8c8"/>
<path d="M22 163.2 L24.6 163.2 L24.6 160.6 Z" fill="#c8c8c8"/>
<path d="M47 163.2 L49.6 163.2 L49.6 160.6 Z" fill="#c8c8c8"/>
<path d="M22 182.79999999999998 L24.6 182.79999999999998 L24.6 180.2 Z" fill="#c8c8c8"/>
<path d="M47 182.79999999999998 L49.6 182.79999999999998 L49.6 180.2 Z" fill="#c8c8c8"/>
<path d="M22 202.79999999999998 L24.6 202.79999999999998 L24.6 200.2 Z" fill="#c8c8c8"/>
<path d="M47 202.79999999999998 L49.6 202.79999999999998 L49.6 200.2 Z" fill="#c8c8c8"/>
<path d="M22 222.2 L24.6 222.2 L24.6 219.6 Z" fill="#c8c8c8"/>
<path d="M47 222.2 L49.6 222.2 L49.6 219.6 Z" fill="#c8c8c8"/>
<path d="M22 242.2 L24.6 242.2 L24.6 239.6 Z" fill="#c8c8c8"/>
<path d="M47 242.2 L49.6 242.2 L49.6 239.6 Z" fill="#c8c8c8"/>
<path d="M22 262.00000000000006 L24.6 262.00000000000006 L24.6 259.40000000000003 Z" fill="#c8c8c8"/>
<path d="M47 262.00000000000006 L49.6 262.00000000000006 L49.6 259.40000000000003 Z" fill="#c8c8c8"/>
<path d="M47 281.50000000000006 L49.6 281.50000000000006 L49.6 278.90000000000003 Z" fill="#c8c8c8"/>
<rect x="24.6" y="302.5" width="19.5" height="19.1" fill="#333333" />
<rect x="25" y="302.9" width="18.75" height="18.35" fill="#ffffff" />
<rect x="26.2" y="304.2" width="16.3" height="15.7" fill="#4a97ff" />
<rect x="13.4" y="290.6" width="19.7" height="19.4" fill="#333333" />
<rect x="13.8" y="291" width="18.9" height="18.6" fill="#ffffff" />
<rect x="15" y="292.2" width="16.4" height="16.2" fill="#000000" />
<g fill="none" stroke="#cccccc" stroke-width="1"><path d="M40 292 L42.6 292 Q43.8 292 43.8 293.4 L43.8 296"/></g><path d="M40.6 290 L38.2 292 L40.6 294 Z M41.8 295.2 L45.8 295.2 L43.8 297.8 Z" fill="#cccccc"/>
<rect x="17" y="319" width="5" height="5" fill="#e2e2e2" />
<rect x="13.8" y="316" width="5" height="5" fill="#e2e2e2" />
<rect x="14.8" y="317" width="3" height="3" fill="#000" />
<g fill="none" stroke="#dedede" stroke-width="0.9"><rect x="8.7" y="332.3" width="12.6" height="9.4" rx="0.8"/><circle cx="15" cy="337" r="3" stroke-dasharray="1.5 1"/></g>
<g fill="#535353" stroke="#dedede" stroke-width="0.9"><rect x="33.6" y="334.5" width="8" height="6.5"/><rect x="37.8" y="331.6" width="8" height="6.5"/></g>
<path d="M47 343.1 L49.6 343.1 L49.6 340.5 Z" fill="#c8c8c8"/>
<rect x="55" y="496" width="713" height="1" fill="#535353" opacity="0.5"/>
</svg>
<span class="t r g" style="left:89.1px;top:72.9px;font-size:7.6px;color:#c6c6c6;">200</span>
<span class="t r g" style="left:122.8px;top:72.9px;font-size:7.6px;color:#c6c6c6;">0</span>
<span class="t r g" style="left:156.5px;top:72.9px;font-size:7.6px;color:#c6c6c6;">200</span>
<span class="t r g" style="left:190.1px;top:72.9px;font-size:7.6px;color:#c6c6c6;">400</span>
<span class="t r g" style="left:223.8px;top:72.9px;font-size:7.6px;color:#c6c6c6;">600</span>
<span class="t r g" style="left:257.5px;top:72.9px;font-size:7.6px;color:#c6c6c6;">800</span>
<span class="t r g" style="left:291.2px;top:72.9px;font-size:7.6px;color:#c6c6c6;">1000</span>
<span class="t r g" style="left:324.8px;top:72.9px;font-size:7.6px;color:#c6c6c6;">1200</span>
<span class="t r g" style="left:358.5px;top:72.9px;font-size:7.6px;color:#c6c6c6;">1400</span>
<span class="t r g" style="left:392.2px;top:72.9px;font-size:7.6px;color:#c6c6c6;">1600</span>
<span class="t r g" style="left:425.8px;top:72.9px;font-size:7.6px;color:#c6c6c6;">1800</span>
<span class="t r g" style="left:459.5px;top:72.9px;font-size:7.6px;color:#c6c6c6;">2000</span>
<span class="t r g" style="left:493.2px;top:72.9px;font-size:7.6px;color:#c6c6c6;">2200</span>
<span class="t r g" style="left:526.8px;top:72.9px;font-size:7.6px;color:#c6c6c6;">2400</span>
<span class="t r g" style="left:560.5px;top:72.9px;font-size:7.6px;color:#c6c6c6;">2600</span>
<span class="t r g" style="left:594.2px;top:72.9px;font-size:7.6px;color:#c6c6c6;">2800</span>
<span class="t r g" style="left:627.9px;top:72.9px;font-size:7.6px;color:#c6c6c6;">3000</span>
<span class="t r g" style="left:661.5px;top:72.9px;font-size:7.6px;color:#c6c6c6;">3200</span>
<span class="t r g" style="left:695.2px;top:72.9px;font-size:7.6px;color:#c6c6c6;">3400</span>
<span class="t r g" style="left:728.9px;top:72.9px;font-size:7.6px;color:#c6c6c6;">3600</span>
<span class="t r v g" style="left:60.9px;top:82.9px;font-size:7.6px;color:#b8b8b8;">0</span>
<span class="t r v g" style="left:60.9px;top:116.6px;font-size:7.6px;color:#b8b8b8;">2</span>
<span class="t r v g" style="left:60.9px;top:122.6px;font-size:7.6px;color:#b8b8b8;">0</span>
<span class="t r v g" style="left:60.9px;top:128.6px;font-size:7.6px;color:#b8b8b8;">0</span>
<span class="t r v g" style="left:60.9px;top:150.2px;font-size:7.6px;color:#b8b8b8;">4</span>
<span class="t r v g" style="left:60.9px;top:156.2px;font-size:7.6px;color:#b8b8b8;">0</span>
<span class="t r v g" style="left:60.9px;top:162.2px;font-size:7.6px;color:#b8b8b8;">0</span>
<span class="t r v g" style="left:60.9px;top:183.9px;font-size:7.6px;color:#b8b8b8;">6</span>
<span class="t r v g" style="left:60.9px;top:189.9px;font-size:7.6px;color:#b8b8b8;">0</span>
<span class="t r v g" style="left:60.9px;top:195.9px;font-size:7.6px;color:#b8b8b8;">0</span>
<span class="t r v g" style="left:60.9px;top:217.6px;font-size:7.6px;color:#b8b8b8;">8</span>
<span class="t r v g" style="left:60.9px;top:223.6px;font-size:7.6px;color:#b8b8b8;">0</span>
<span class="t r v g" style="left:60.9px;top:229.6px;font-size:7.6px;color:#b8b8b8;">0</span>
<span class="t r v g" style="left:60.9px;top:251.3px;font-size:7.6px;color:#b8b8b8;">1</span>
<span class="t r v g" style="left:60.9px;top:257.2px;font-size:7.6px;color:#b8b8b8;">0</span>
<span class="t r v g" style="left:60.9px;top:263.2px;font-size:7.6px;color:#b8b8b8;">0</span>
<span class="t r v g" style="left:60.9px;top:269.2px;font-size:7.6px;color:#b8b8b8;">0</span>
<span class="t r v g" style="left:60.9px;top:284.9px;font-size:7.6px;color:#b8b8b8;">1</span>
<span class="t r v g" style="left:60.9px;top:290.9px;font-size:7.6px;color:#b8b8b8;">2</span>
<span class="t r v g" style="left:60.9px;top:296.9px;font-size:7.6px;color:#b8b8b8;">0</span>
<span class="t r v g" style="left:60.9px;top:302.9px;font-size:7.6px;color:#b8b8b8;">0</span>
<span class="t r v g" style="left:60.9px;top:318.6px;font-size:7.6px;color:#b8b8b8;">1</span>
<span class="t r v g" style="left:60.9px;top:324.6px;font-size:7.6px;color:#b8b8b8;">4</span>
<span class="t r v g" style="left:60.9px;top:330.6px;font-size:7.6px;color:#b8b8b8;">0</span>
<span class="t r v g" style="left:60.9px;top:336.6px;font-size:7.6px;color:#b8b8b8;">0</span>
<span class="t r v g" style="left:60.9px;top:352.3px;font-size:7.6px;color:#b8b8b8;">1</span>
<span class="t r v g" style="left:60.9px;top:358.3px;font-size:7.6px;color:#b8b8b8;">6</span>
<span class="t r v g" style="left:60.9px;top:364.3px;font-size:7.6px;color:#b8b8b8;">0</span>
<span class="t r v g" style="left:60.9px;top:370.3px;font-size:7.6px;color:#b8b8b8;">0</span>
<span class="t r v g" style="left:60.9px;top:385.9px;font-size:7.6px;color:#b8b8b8;">1</span>
<span class="t r v g" style="left:60.9px;top:391.9px;font-size:7.6px;color:#b8b8b8;">8</span>
<span class="t r v g" style="left:60.9px;top:397.9px;font-size:7.6px;color:#b8b8b8;">0</span>
<span class="t r v g" style="left:60.9px;top:403.9px;font-size:7.6px;color:#b8b8b8;">0</span>
<span class="t r v g" style="left:60.9px;top:419.6px;font-size:7.6px;color:#b8b8b8;">2</span>
<span class="t r v g" style="left:60.9px;top:425.6px;font-size:7.6px;color:#b8b8b8;">0</span>
<span class="t r v g" style="left:60.9px;top:431.6px;font-size:7.6px;color:#b8b8b8;">0</span>
<span class="t r v g" style="left:60.9px;top:437.6px;font-size:7.6px;color:#b8b8b8;">0</span>
<span class="t r v g" style="left:60.9px;top:453.3px;font-size:7.6px;color:#b8b8b8;">2</span>
<span class="t r v g" style="left:60.9px;top:459.3px;font-size:7.6px;color:#b8b8b8;">2</span>
<span class="t r v g" style="left:60.9px;top:465.3px;font-size:7.6px;color:#b8b8b8;">0</span>
<span class="t r v g" style="left:60.9px;top:471.3px;font-size:7.6px;color:#b8b8b8;">0</span>
<span class="t r v g" style="left:60.9px;top:486.9px;font-size:7.6px;color:#b8b8b8;">2</span>
<span class="t r v g" style="left:60.9px;top:492.9px;font-size:7.6px;color:#b8b8b8;">4</span>
<span class="t r v g" style="left:60.9px;top:498.9px;font-size:7.6px;color:#b8b8b8;">0</span>
<span class="t r v g" style="left:60.9px;top:504.9px;font-size:7.6px;color:#b8b8b8;">0</span>
<span class="t " style="left:6.7px;top:5.2px;font-size:6.5px;color:#31a8ff;font-weight:bold;transform:scaleX(0.8802);">Ps</span>
<span class="t g" style="left:27px;top:3.5px;font-size:9.2px;color:#e4e4e4;transform:scaleX(0.8776);">File</span>
<span class="t g" style="left:49.1px;top:3.5px;font-size:9.2px;color:#e4e4e4;transform:scaleX(0.9783);">Edit</span>
<span class="t g" style="left:73.1px;top:3.5px;font-size:9.2px;color:#e4e4e4;transform:scaleX(0.9786);">Image</span>
<span class="t g" style="left:107.6px;top:3.5px;font-size:9.2px;color:#e4e4e4;transform:scaleX(0.9354);">Layer</span>
<span class="t g" style="left:138px;top:3.5px;font-size:9.2px;color:#e4e4e4;transform:scaleX(0.9537);">Type</span>
<span class="t g" style="left:166px;top:3.5px;font-size:9.2px;color:#e4e4e4;transform:scaleX(0.9394);">Select</span>
<span class="t g" style="left:198.2px;top:3.5px;font-size:9.2px;color:#e4e4e4;transform:scaleX(0.9793);">Filter</span>
<span class="t g" style="left:227.2px;top:3.5px;font-size:9.2px;color:#e4e4e4;transform:scaleX(0.9702);">3D</span>
<span class="t g" style="left:248px;top:3.5px;font-size:9.2px;color:#e4e4e4;transform:scaleX(0.9620);">View</span>
<span class="t g" style="left:276.0px;top:3.5px;font-size:9.2px;color:#e4e4e4;transform:scaleX(0.9622);">Plugins</span>
<span class="t g" style="left:314px;top:3.5px;font-size:9.2px;color:#e4e4e4;transform:scaleX(1.0096);">Window</span>
<span class="t g" style="left:356.3px;top:3.5px;font-size:9.2px;color:#e4e4e4;transform:scaleX(0.9415);">Help</span>
<span class="t " style="left:90.1px;top:28.5px;font-size:8.6px;color:#e0e0e0;transform:scaleX(0.8719);">Pixels</span>
<span class="t " style="left:146px;top:27.8px;font-size:8.6px;color:#d6d6d6;transform:scaleX(0.8999);">Mode:</span>
<span class="t " style="left:178.1px;top:28.5px;font-size:8.6px;color:#e0e0e0;transform:scaleX(0.9205);">Normal</span>
<span class="t " style="left:256px;top:27.8px;font-size:8.6px;color:#d6d6d6;transform:scaleX(0.9039);">Opacity:</span>
<span class="t " style="left:292.7px;top:28.0px;font-size:8.6px;color:#e0e0e0;transform:scaleX(0.9552);">100%</span>
<span class="t g" style="left:465.2px;top:28.2px;font-size:7.5px;color:#e6e6e6;font-weight:bold;transform:scaleX(1.1506);">#</span>
<span class="t " style="left:480.9px;top:28.0px;font-size:8.6px;color:#e0e0e0;transform:scaleX(0.8715);">100</span>
<span class="t " style="left:532.6px;top:28.0px;font-size:8.6px;color:#e0e0e0;transform:scaleX(0.9538);">0 px</span>
<span class="t g" style="left:64px;top:51.5px;font-size:9.3px;color:#f2f2f2;font-weight:bold;transform:scaleX(0.9932);">Untitled-1 @ 33.3% (RGB/8) *</span>
</body></html>
